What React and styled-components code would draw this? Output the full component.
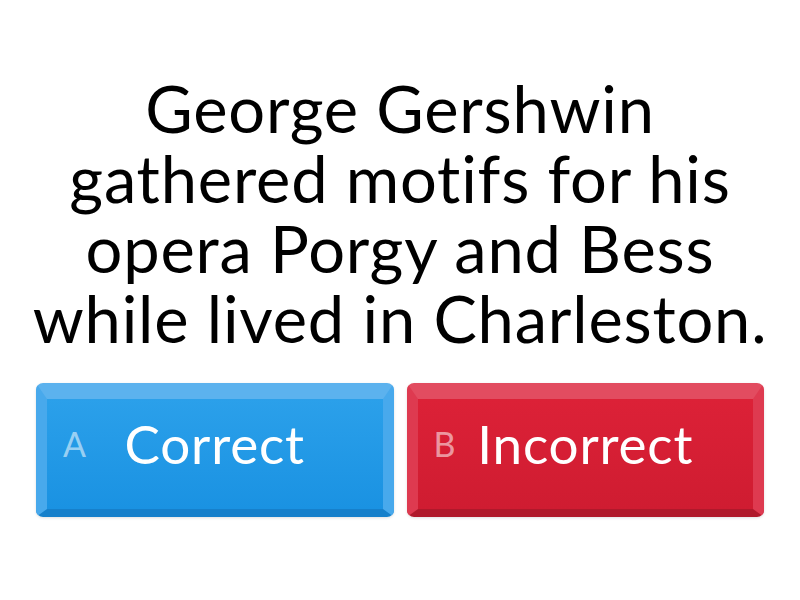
import React from "react";
import styled, { createGlobalStyle } from "styled-components";

const GlobalStyle = createGlobalStyle`
  html, body {
    margin: 0;
    padding: 0;
    background: #ffffff;
  }
  body {
    font-family: "Lato", "Noto Sans", sans-serif;
  }
`;

const Screen = styled.div`
  width: 800px;
  height: 600px;
  box-sizing: border-box;
  padding: 64px 36px 0;
  display: flex;
  flex-direction: column;
  align-items: center;
`;

const Question = styled.div`
  width: 100%;
  height: 298px;
  display: flex;
  align-items: center;
  justify-content: center;
  text-align: center;
  font-size: 65px;
  line-height: 70px;
  letter-spacing: 0.8px;
  color: #000;
  white-space: nowrap;
`;

const Answers = styled.div`
  width: 100%;
  display: grid;
  grid-template-columns: 1fr 1fr;
  gap: 13px;
  margin-top: 21px;
`;

const colors = {
  blue: {
    top: "#5cb2ee",
    side: "#48a9ec",
    bottom: "#1680cb",
    from: "#2ba0ea",
    to: "#1a92e2",
  },
  red: {
    top: "#e24c60",
    side: "#de3a50",
    bottom: "#b0192b",
    from: "#dc2137",
    to: "#cf1c31",
  },
};

const AnswerButton = styled.button`
  height: 134px;
  box-sizing: border-box;
  border-radius: 7px;
  border-style: solid;
  border-width: 16px 11px 8px;
  border-color: ${(p) => colors[p.$tone].top} ${(p) => colors[p.$tone].side}
    ${(p) => colors[p.$tone].bottom};
  background: linear-gradient(
    ${(p) => colors[p.$tone].from},
    ${(p) => colors[p.$tone].to}
  );
  box-shadow: 0 1px 3px rgba(0, 0, 0, 0.12);
  display: grid;
  grid-template-columns: 34px 1fr 34px;
  align-items: center;
  padding: 0 16px 21px;
  font-family: inherit;
  color: #fff;
  cursor: pointer;
`;

const Letter = styled.span`
  font-size: 34px;
  text-align: left;
  color: rgba(255, 255, 255, 0.55);
`;

const Label = styled.span`
  text-align: center;
  font-size: 53px;
  letter-spacing: 0.8px;
  white-space: nowrap;
`;

export default function App() {
  return (
    <Screen>
      <GlobalStyle />
      <Question>
        George Gershwin
        <br />
        gathered motifs for his
        <br />
        opera Porgy and Bess
        <br />
        while lived in Charleston.
      </Question>
      <Answers>
        <AnswerButton $tone="blue">
          <Letter>A</Letter>
          <Label>Correct</Label>
        </AnswerButton>
        <AnswerButton $tone="red">
          <Letter>B</Letter>
          <Label>Incorrect</Label>
        </AnswerButton>
      </Answers>
    </Screen>
  );
}
